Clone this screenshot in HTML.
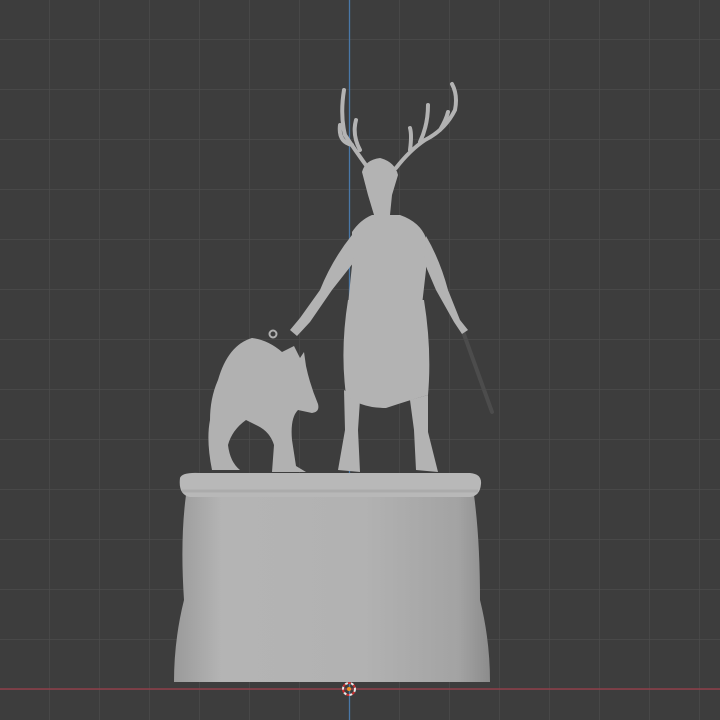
<!DOCTYPE html><html><head><style>
html,body{margin:0;padding:0;background:#3d3d3d;width:720px;height:720px;overflow:hidden}
</style></head><body>
<svg width="720" height="720" viewBox="0 0 720 720" xmlns="http://www.w3.org/2000/svg">
<defs>
<pattern id="g" x="49" y="39" width="50" height="50" patternUnits="userSpaceOnUse">
<path d="M0 0H50M0 0V50" stroke="#4d4d4d" stroke-width="1.2" fill="none"/>
</pattern>
<linearGradient id="b" x1="0" x2="1">
<stop offset="0" stop-color="#9a9a9a"/><stop offset="0.15" stop-color="#b4b4b4"/><stop offset="0.6" stop-color="#b2b2b2"/><stop offset="0.9" stop-color="#a3a3a3"/><stop offset="1" stop-color="#8c8c8c"/>
</linearGradient>
</defs>
<rect width="720" height="720" fill="#3d3d3d"/>
<rect width="720" height="720" fill="url(#g)"/>
<line x1="349.5" y1="0" x2="349.5" y2="720" stroke="#4a78a8" stroke-width="1.3"/>
<line x1="0" y1="689" x2="720" y2="689" stroke="#8f3f4a" stroke-width="1.6"/>
<!-- base -->
<path d="M186 495 Q180 540 184 600 Q174 640 174 682 L490 682 Q490 640 480 600 Q480 540 474 495 Z" fill="url(#b)"/>
<path d="M180 478 Q182 472 200 473 L470 473 Q482 474 481 484 Q480 496 470 497 L190 497 Q178 495 180 478Z" fill="#b8b8b8"/>
<path d="M182 491 L478 491" stroke="#a0a0a0" stroke-width="3" opacity="0.5"/>
<!-- staff -->
<line x1="461" y1="326" x2="492" y2="412" stroke="#4c4c4c" stroke-width="4" stroke-linecap="round"/>
<!-- wolf -->
<g fill="#b1b1b1">
<path d="M218 380 Q228 345 252 338 Q268 340 282 352 L294 346 L300 358 L304 352 L306 366 Q310 385 318 404 Q320 412 312 413 L298 410 Q290 418 292 440 L296 466 L306 472 L272 472 L274 445 Q270 432 258 426 L246 420 Q232 430 228 445 Q230 462 240 470 L212 470 Q206 440 210 420 Q210 398 218 380Z"/>
<circle cx="273" cy="334" r="3.5" fill="none" stroke="#b1b1b1" stroke-width="2"/>
</g>
<!-- man -->
<g fill="#b3b3b3">
<path d="M344 390 L345 430 L338 470 L360 472 L358 430 L360 400Z"/>
<path d="M410 400 L414 430 L416 470 L438 472 L428 432 L428 395Z"/>
<path d="M348 300 Q340 350 346 395 Q360 408 386 408 Q410 400 428 395 Q432 350 424 300Z"/>
<path d="M352 232 Q360 220 372 215 L400 215 Q420 222 426 238 L426 270 L422 305 L348 305 L352 265Z"/>
<path d="M352 235 Q332 260 320 290 L300 318 L290 330 L297 336 L310 322 L332 290 L354 262Z"/>
<path d="M426 236 Q440 260 448 290 L460 320 L468 330 L462 334 L454 322 L436 290 L424 262Z"/>
<path d="M362 172 Q365 160 380 158 Q395 162 398 175 L392 195 L390 215 L374 215 L368 195Z"/>
</g>
<g stroke="#b3b3b3" stroke-width="4" fill="none" stroke-linecap="round">
<path d="M368 168 Q355 150 345 135 M345 135 Q340 115 344 90 M352 145 Q338 142 340 125 M360 150 Q352 135 356 120"/>
<path d="M396 168 Q410 150 425 140 Q445 130 455 110 Q458 95 452 84 M420 142 Q428 125 428 105 M410 150 Q412 135 410 128 M440 130 Q446 120 448 112"/>
</g>
<!-- origin marker -->
<circle cx="349" cy="689" r="6" fill="none" stroke="#e8e8e8" stroke-width="2" stroke-dasharray="3 3"/>
<circle cx="349" cy="689" r="6" fill="none" stroke="#c83030" stroke-width="2" stroke-dasharray="3 3" stroke-dashoffset="3"/>
<circle cx="349" cy="689" r="2" fill="#f09020"/>
</svg>
</body></html>
